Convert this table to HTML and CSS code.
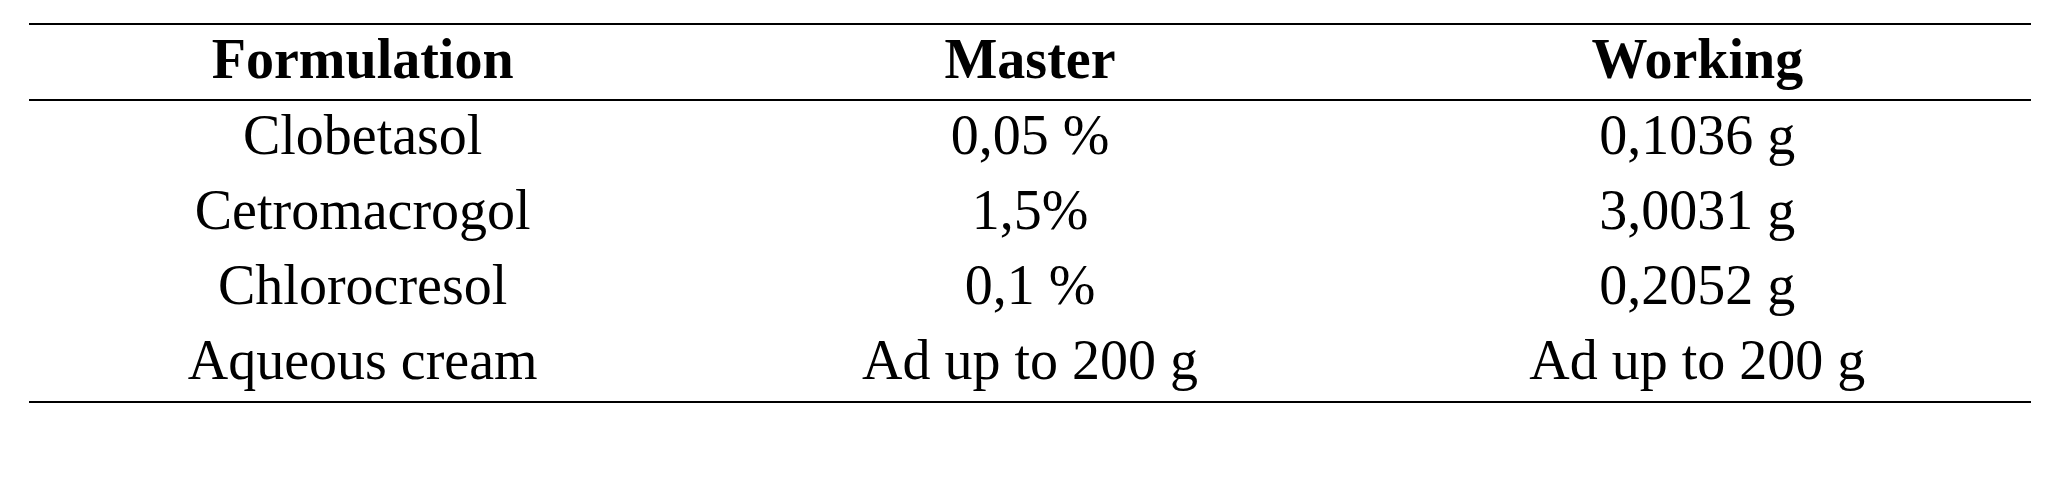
FILE: index.html
```html
<!DOCTYPE html>
<html lang="en">
<head>
<meta charset="utf-8">
<title>Formulation</title>
<link rel="stylesheet" href="styles.css">
</head>
<body>
<table class="formula">
  <thead>
    <tr>
      <th>Formulation</th>
      <th>Master</th>
      <th>Working</th>
    </tr>
  </thead>
  <tbody>
    <tr>
      <td>Clobetasol</td>
      <td>0,05 %</td>
      <td>0,1036 g</td>
    </tr>
    <tr>
      <td>Cetromacrogol</td>
      <td>1,5%</td>
      <td>3,0031 g</td>
    </tr>
    <tr>
      <td>Chlorocresol</td>
      <td>0,1 %</td>
      <td>0,2052 g</td>
    </tr>
    <tr class="last">
      <td>Aqueous cream</td>
      <td>Ad up to 200 g</td>
      <td>Ad up to 200 g</td>
    </tr>
  </tbody>
</table>
</body>
</html>
```
FILE: styles.css
```css
html, body {
  margin: 0;
  padding: 0;
  background: #ffffff;
}

body {
  font-family: "Liberation Serif", "Times New Roman", serif;
  color: #000000;
}

.formula {
  margin: 23px 0 0 29px;
  width: 2002px;
  table-layout: fixed;
  border-collapse: separate;
  border-spacing: 0;
}

.formula th,
.formula td {
  font-size: 56px;
  line-height: 60px;
  text-align: center;
  white-space: nowrap;
  width: 33.333%;
}

.formula th {
  font-weight: bold;
  padding: 4px 0 10px;
  border-top: 2px solid #000000;
  border-bottom: 2px solid #000000;
}

.formula td {
  font-weight: normal;
  padding: 4px 0 11px;
}

.formula tr.last td {
  border-bottom: 2px solid #000000;
}
```
